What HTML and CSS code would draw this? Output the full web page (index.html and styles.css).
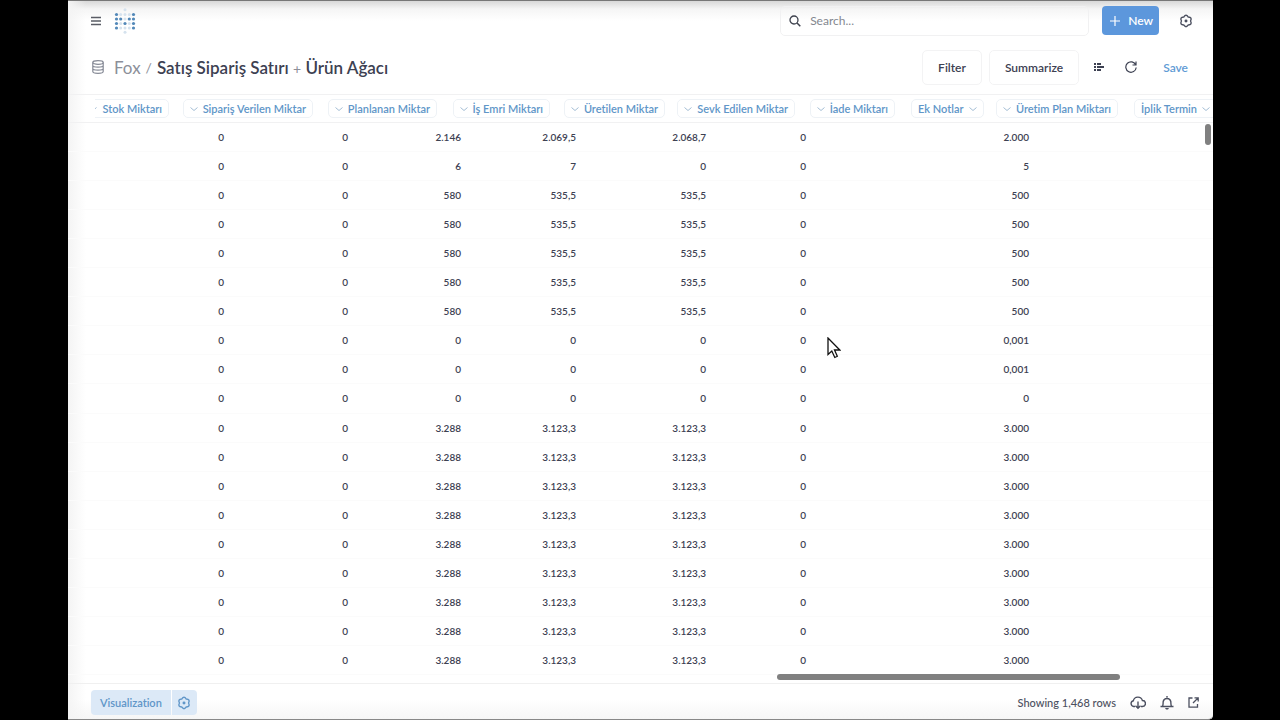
FILE: index.html
```html
<!DOCTYPE html>
<html lang="tr">
<head>
<meta charset="utf-8">
<title>Satış Sipariş Satırı + Ürün Ağacı</title>
<link rel="stylesheet" href="styles.css">
</head>
<body>
<svg class="defs" aria-hidden="true">
  <symbol id="chev" viewBox="0 0 8 8"><path d="M.5 2.5 4 5.5 7.5 2.5" fill="none" stroke="currentColor" stroke-width="1"/></symbol>
  <symbol id="gear" viewBox="0 0 16 16"><path d="M5.4 3.500Q8 -.5 10.600 3.500Q15.400 3.750 13.200 8Q15.400 12.250 10.600 12.500Q8 16.500 5.400 12.500Q.6 12.250 2.800 8Q.6 3.750 5.400 3.500Z" fill="none" stroke="currentColor" stroke-width="1.600" stroke-linejoin="round"/><circle cx="8" cy="8" r="1.700" fill="currentColor"/></symbol>
</svg>
<div class="app">
  <header class="topbar">
    <button class="icon-btn" aria-label="Menu"><svg width="10" height="10" viewBox="0 0 10 10"><path d="M0 1.500H10M0 5H10M0 8.500H10" stroke="#5a5d66" stroke-width="1.600"/></svg></button>
    <a class="logo" href="#" aria-label="Home"><svg width="22" height="26" viewBox="0 0 22 26">
      <g fill="#5288b8"><circle cx="2.500" cy="6.500" r="1.600"/><circle cx="19.500" cy="6.500" r="1.600"/><circle cx="2.500" cy="11" r="1.600"/><circle cx="6.700" cy="11" r="1.600"/><circle cx="15.300" cy="11" r="1.600"/><circle cx="19.500" cy="11" r="1.600"/><circle cx="2.500" cy="15.500" r="1.600"/><circle cx="11" cy="15.500" r="1.600"/><circle cx="19.500" cy="15.500" r="1.600"/><circle cx="2.500" cy="20" r="1.600"/><circle cx="19.500" cy="20" r="1.600"/></g>
      <g fill="#d5e2ee"><circle cx="11" cy="1.700" r="1.500"/><circle cx="6.700" cy="6.500" r="1.500"/><circle cx="11" cy="6.500" r="1.500"/><circle cx="15.300" cy="6.500" r="1.500"/><circle cx="11" cy="11" r="1.500"/><circle cx="6.700" cy="15.500" r="1.500"/><circle cx="15.300" cy="15.500" r="1.500"/><circle cx="6.700" cy="20" r="1.500"/><circle cx="11" cy="20" r="1.500"/><circle cx="15.300" cy="20" r="1.500"/><circle cx="11" cy="24.300" r="1.500"/></g></svg></a>
    <label class="search"><svg width="12" height="12" viewBox="0 0 12 12"><circle cx="5" cy="5" r="4" fill="none" stroke="#3d414d" stroke-width="1.300"/><path d="M8 8 11.300 11.300" stroke="#3d414d" stroke-width="1.500"/></svg><input type="text" placeholder="Search..." aria-label="Search"></label>
    <button class="new"><svg width="10" height="10" viewBox="0 0 10 10"><path d="M5 0V10M0 5H10" stroke="#fff" stroke-width="1.200"/></svg>New</button>
    <button class="icon-btn settings" aria-label="Settings"><svg width="14" height="14"><use href="#gear"/></svg></button>
  </header>

  <section class="query">
    <svg class="db" width="12" height="14" viewBox="0 0 12 14"><g fill="none" stroke="#868a96" stroke-width="1.200"><ellipse cx="6" cy="2.500" rx="5.200" ry="1.800"/><path d="M.8 2.500V11.500C.8 12.600 3 13.300 6 13.300S11.200 12.600 11.200 11.500V2.500M.8 5.500C.8 6.600 3 7.100 6 7.100S11.200 6.600 11.200 5.500M.8 8.600C.8 9.700 3 10.200 6 10.200S11.200 9.700 11.200 8.600"/></g></svg>
    <a class="source" href="#">Fox</a><span class="slash">/</span>
    <h1>Satış Sipariş Satırı <span>+</span> Ürün Ağacı</h1>
    <button class="action">Filter</button>
    <button class="action">Summarize</button>
    <button class="icon-btn notebook" aria-label="Editor"><svg width="10" height="10" viewBox="0 0 10 10"><path d="M0 2H2M3 2H7M0 5H2M3 5H10M0 8H2M3 8H7" stroke="#3d4152" stroke-width="2"/></svg></button>
    <button class="icon-btn refresh" aria-label="Refresh"><svg width="12" height="12" viewBox="0 0 12 12"><path d="M10.800 4A5.200 5.200 0 1 0 11.200 6.500M11 .5V4H7.500" fill="none" stroke="#3d4152" stroke-width="1.200"/></svg></button>
    <a class="save" href="#">Save</a>
  </section>

  <main class="results">
    <table>
      <thead><tr>
        <th><button class="pill"><svg><use href="#chev"/></svg>Stok Miktarı</button></th>
        <th><button class="pill"><svg><use href="#chev"/></svg>Sipariş Verilen Miktar</button></th>
        <th><button class="pill"><svg><use href="#chev"/></svg>Planlanan Miktar</button></th>
        <th><button class="pill"><svg><use href="#chev"/></svg>İş Emri Miktarı</button></th>
        <th><button class="pill"><svg><use href="#chev"/></svg>Üretilen Miktar</button></th>
        <th><button class="pill"><svg><use href="#chev"/></svg>Sevk Edilen Miktar</button></th>
        <th><button class="pill"><svg><use href="#chev"/></svg>İade Miktarı</button></th>
        <th class="left"><button class="pill">Ek Notlar<svg><use href="#chev"/></svg></button></th>
        <th><button class="pill"><svg><use href="#chev"/></svg>Üretim Plan Miktarı</button></th>
        <th class="left"><button class="pill">İplik Termin<svg><use href="#chev"/></svg></button></th>
      </tr></thead>
      <tbody>
        <tr><td></td><td>0</td><td>0</td><td>2.146</td><td>2.069,5</td><td>2.068,7</td><td>0</td><td></td><td>2.000</td><td></td></tr>
        <tr><td></td><td>0</td><td>0</td><td>6</td><td>7</td><td>0</td><td>0</td><td></td><td>5</td><td></td></tr>
        <tr><td></td><td>0</td><td>0</td><td>580</td><td>535,5</td><td>535,5</td><td>0</td><td></td><td>500</td><td></td></tr>
        <tr><td></td><td>0</td><td>0</td><td>580</td><td>535,5</td><td>535,5</td><td>0</td><td></td><td>500</td><td></td></tr>
        <tr><td></td><td>0</td><td>0</td><td>580</td><td>535,5</td><td>535,5</td><td>0</td><td></td><td>500</td><td></td></tr>
        <tr><td></td><td>0</td><td>0</td><td>580</td><td>535,5</td><td>535,5</td><td>0</td><td></td><td>500</td><td></td></tr>
        <tr><td></td><td>0</td><td>0</td><td>580</td><td>535,5</td><td>535,5</td><td>0</td><td></td><td>500</td><td></td></tr>
        <tr><td></td><td>0</td><td>0</td><td>0</td><td>0</td><td>0</td><td>0</td><td></td><td>0,001</td><td></td></tr>
        <tr><td></td><td>0</td><td>0</td><td>0</td><td>0</td><td>0</td><td>0</td><td></td><td>0,001</td><td></td></tr>
        <tr><td></td><td>0</td><td>0</td><td>0</td><td>0</td><td>0</td><td>0</td><td></td><td>0</td><td></td></tr>
        <tr><td></td><td>0</td><td>0</td><td>3.288</td><td>3.123,3</td><td>3.123,3</td><td>0</td><td></td><td>3.000</td><td></td></tr>
        <tr><td></td><td>0</td><td>0</td><td>3.288</td><td>3.123,3</td><td>3.123,3</td><td>0</td><td></td><td>3.000</td><td></td></tr>
        <tr><td></td><td>0</td><td>0</td><td>3.288</td><td>3.123,3</td><td>3.123,3</td><td>0</td><td></td><td>3.000</td><td></td></tr>
        <tr><td></td><td>0</td><td>0</td><td>3.288</td><td>3.123,3</td><td>3.123,3</td><td>0</td><td></td><td>3.000</td><td></td></tr>
        <tr><td></td><td>0</td><td>0</td><td>3.288</td><td>3.123,3</td><td>3.123,3</td><td>0</td><td></td><td>3.000</td><td></td></tr>
        <tr><td></td><td>0</td><td>0</td><td>3.288</td><td>3.123,3</td><td>3.123,3</td><td>0</td><td></td><td>3.000</td><td></td></tr>
        <tr><td></td><td>0</td><td>0</td><td>3.288</td><td>3.123,3</td><td>3.123,3</td><td>0</td><td></td><td>3.000</td><td></td></tr>
        <tr><td></td><td>0</td><td>0</td><td>3.288</td><td>3.123,3</td><td>3.123,3</td><td>0</td><td></td><td>3.000</td><td></td></tr>
        <tr><td></td><td>0</td><td>0</td><td>3.288</td><td>3.123,3</td><td>3.123,3</td><td>0</td><td></td><td>3.000</td><td></td></tr>
      </tbody>
    </table>
    <div class="bar-v"></div>
    <div class="bar-h"></div>
  </main>

  <footer class="footer">
    <div class="viz"><button>Visualization</button><button aria-label="Visualization settings"><svg width="14" height="14"><use href="#gear"/></svg></button></div>
    <span class="count">Showing 1,468 rows</span>
    <button class="icon-btn" aria-label="Download"><svg width="16" height="14" viewBox="0 0 16 14"><path d="M5 10.500H3.700A2.900 2.900 0 0 1 3.300 4.800 4.700 4.700 0 0 1 12.400 4.500 3 3 0 0 1 12.500 10.500H11M8 5.500V12M5.500 9.800 8 12.200 10.500 9.800" fill="none" stroke="#4c5060" stroke-width="1.400"/></svg></button>
    <button class="icon-btn" aria-label="Alerts"><svg width="14" height="14" viewBox="0 0 14 14"><path d="M.5 10.500H13.500M2.500 10.500C3.300 9 3 7.500 3.200 5.500A3.900 3.900 0 0 1 10.800 5.500C11 7.500 10.700 9 11.500 10.500M7 0V1.500" fill="none" stroke="#4c5060" stroke-width="1.400"/><path d="M5 12H9L8 13.600H6Z" fill="#4c5060"/></svg></button>
    <button class="icon-btn" aria-label="Open"><svg width="11" height="11" viewBox="0 0 11 11"><path d="M4.500 1H1V10.200H9.500V7M6.500 .8H10.200V4.500M10 1 5 6" fill="none" stroke="#4c5060" stroke-width="1.300"/></svg></button>
  </footer>
  <svg class="cursor" width="14" height="22" viewBox="0 0 14 22"><path d="M1 1V17.500L4.800 14 7.800 20.500 10.300 19.300 7.500 13H12.800Z" fill="#fff" stroke="#111" stroke-width="1.300"/></svg>
</div>
</body>
</html>
```
FILE: styles.css
```css
* { box-sizing: border-box; }
body { margin: 0; background: #000; font-family: Lato, "Noto Sans", sans-serif; font-variant-ligatures: none; color: #3d4152; }
button { font: inherit; color: inherit; background: none; border: 0; padding: 0; }
a { color: inherit; text-decoration: none; }
svg { display: block; flex: none; }
.defs { position: absolute; width: 0; height: 0; }
.app {
  position: relative; display: flex; flex-direction: column; height: 100vh; margin: 0 67px 0 68px;
  background: linear-gradient(90deg, #f4f4f4, transparent 18px), linear-gradient(0deg, #f6f6f6, transparent 20px), linear-gradient(180deg, #d8d8d8, #f5f5f5 8px, #fff 20px);
  background-color: #fff; border-top: 1px solid #777; border-bottom: 1px solid #888;
  border-radius: 0 0 5px 0; overflow: hidden;
}
.icon-btn { display: flex; align-items: center; justify-content: center; }

.topbar { display: flex; align-items: center; height: 39px; padding: 0 20px 0 23px; }
.logo { margin: 0 auto 0 13px; }
.search { display: flex; align-items: center; gap: 9px; width: 309px; height: 30px; padding: 0 8px; border: 1px solid #f1f1f2; border-radius: 5px; }
.search input { flex: 1; min-width: 0; border: 0; padding: 0; background: none; outline: 0; font: 400 12px Lato, sans-serif; }
.search input::placeholder { color: #84878f; opacity: 1; }
.new { display: flex; align-items: center; gap: 8px; height: 29px; margin: 0 20px 0 13px; padding: 0 6px 0 8px; border-radius: 4px; background: #5c97dc; color: #fff; font-size: 12px; font-weight: 600; }
.settings { color: #4c5060; }

.query { display: flex; align-items: center; height: 54px; padding: 0 25px 0 24px; }
.source { margin-left: 10px; font-size: 17px; color: #8c8f99; }
.slash { margin: 0 5px; font-size: 14px; color: #8c8f99; }
h1 { margin: 0 auto 0 0; font-size: 17px; font-weight: 600; white-space: nowrap; }
h1 span { font-size: 14px; font-weight: 400; color: #8c8f99; }
.action { height: 35px; margin-right: 7px; padding: 0 15px; border: 1px solid #f3f3f4; border-radius: 5px; font-size: 12px; font-weight: 600; }
.notebook { margin-left: 8px; }
.refresh { margin: 0 26px 0 21px; }
.save { font-size: 12px; font-weight: 600; color: #5f9bd5; }

.results { position: relative; flex: 1; min-height: 0; border-top: 1px solid #f1f1f2; border-bottom: 1px solid #f0f0f0; }
table { display: flex; flex-direction: column; height: 100%; padding-bottom: 8px; }
tr { display: grid; grid-template-columns: 83px 144px 124px 113px 115px 130px 100px 88px 135px 118px; }
thead { display: block; padding-left: 27px; overflow: hidden; border-bottom: 1px solid #f1f1f2; }
thead tr { height: 27px; overflow: hidden; }
th { display: flex; align-items: center; justify-content: flex-end; padding: 0 9px 0 0; }
th.left { justify-content: flex-start; padding: 0 0 0 7px; }
.pill { display: flex; align-items: center; gap: 5px; height: 19px; padding: 0 6px; border: 1px solid #eef2f6; border-radius: 5px; color: #6096c8; font-size: 11px; font-weight: 600; white-space: nowrap; }
.pill svg { width: 8px; height: 8px; color: #a3bdd4; }
tbody { display: grid; flex: 1; min-height: 0; grid-auto-rows: 1fr; overflow: hidden; padding-left: 27px; }
tbody tr { margin-left: -83px; border-bottom: 1px solid #fbfbfb; }
td { display: flex; align-items: center; justify-content: flex-end; padding: 0 15px 0 0; font-size: 10px; font-weight: 600; }
.bar-v, .bar-h { position: absolute; background: #808080; border-radius: 3px; }
.bar-v { top: 29px; right: 2px; width: 6px; height: 21px; }
.bar-h { right: 93px; bottom: 3px; width: 343px; height: 6px; }

.footer { display: flex; align-items: center; gap: 14px; height: 35px; padding: 2px 14px 0 23px; }
.viz { display: flex; gap: 1px; margin-right: auto; color: #6096c8; font-size: 11px; font-weight: 600; }
.viz button { display: flex; align-items: center; justify-content: center; height: 25px; padding: 0 9px; background: #dce9f7; border-radius: 4px 0 0 4px; }
.viz button + button { width: 25px; padding: 0; border-radius: 0 4px 4px 0; }
.count { font-size: 11px; font-weight: 500; color: #4c5060; }
.cursor { position: absolute; left: 759px; top: 336px; }
```
